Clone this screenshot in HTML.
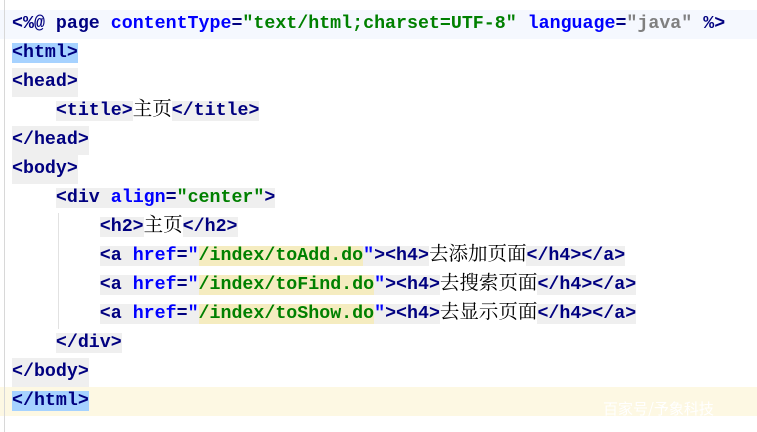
<!DOCTYPE html>
<html><head><meta charset="utf-8"><style>
body{margin:0;width:757px;height:432px;background:#fff;overflow:hidden;position:relative;font-family:"Liberation Mono","Noto Serif CJK SC",monospace;font-size:18.3px;font-weight:bold;}
.l{position:absolute;left:12px;height:29px;line-height:29px;white-space:pre;color:#000080;}
.g{background:#efefef}
.a{color:#0000ff}
.s{color:#008000}
.y{background:#f5ecc0}
.c{font-family:"Noto Serif CJK SC",serif;font-weight:normal;color:#000;background:#fff;font-size:19.5px;line-height:1}
.gr{color:#808080}
.guide{position:absolute;width:1px;background:#e2e2e2}
</style></head><body>
<div style="position:absolute;left:0;top:10px;width:757px;height:29px;background:#f5f8fe"></div>
<div style="position:absolute;left:0;top:387px;width:757px;height:29px;background:#fdf8e3"></div>
<div class="guide" style="left:4px;top:0;height:432px;background:#d8d8d8"></div>
<div class="guide" style="left:58px;top:213px;height:116px"></div>
<div class="l" style="top:-19px;left:100px;color:#999">%&gt;</div>
<div class="l" style="top:10px">&lt;%@ page <span class="a">contentType</span>=<span class="s">"text/html;charset=UTF-8"</span> <span class="a">language</span>=<span class="gr">"java"</span> %&gt;</div>
<div class="l" style="top:39px"><span style="background:#a6d2ff">&lt;html&gt;</span></div>
<div class="l g" style="top:68px">&lt;head&gt;</div>
<div class="l" style="top:97px">    <span class="g">&lt;title&gt;</span><span class="c">主页</span><span class="g">&lt;/title&gt;</span></div>
<div class="l g" style="top:126px">&lt;/head&gt;</div>
<div class="l g" style="top:155px">&lt;body&gt;</div>
<div class="l" style="top:184px">    <span class="g">&lt;div <span class="a">align</span>=<span class="s">"center"</span>&gt;</span></div>
<div class="l" style="top:213px">        <span class="g">&lt;h2&gt;</span><span class="c">主页</span><span class="g">&lt;/h2&gt;</span></div>
<div class="l" style="top:242px">        <span class="g">&lt;a <span class="a">href</span>=<span class="a">"</span><span class="s y">/index/toAdd.do</span><span class="a">"</span>&gt;&lt;h4&gt;</span><span class="c">去添加页面</span><span class="g">&lt;/h4&gt;&lt;/a&gt;</span></div>
<div class="l" style="top:271px">        <span class="g">&lt;a <span class="a">href</span>=<span class="a">"</span><span class="s y">/index/toFind.do</span><span class="a">"</span>&gt;&lt;h4&gt;</span><span class="c">去搜索页面</span><span class="g">&lt;/h4&gt;&lt;/a&gt;</span></div>
<div class="l" style="top:300px">        <span class="g">&lt;a <span class="a">href</span>=<span class="a">"</span><span class="s y">/index/toShow.do</span><span class="a">"</span>&gt;&lt;h4&gt;</span><span class="c">去显示页面</span><span class="g">&lt;/h4&gt;&lt;/a&gt;</span></div>
<div class="l" style="top:329px">    <span class="g">&lt;/div&gt;</span></div>
<div class="l g" style="top:358px">&lt;/body&gt;</div>
<div class="l" style="top:387px"><span style="background:#a6d2ff">&lt;/html&gt;</span></div>
<div style="position:absolute;left:603px;top:398px;font-family:'Noto Sans CJK SC',sans-serif;font-size:15px;font-weight:normal;color:#fff">百家号/予象科技</div>
</body></html>
